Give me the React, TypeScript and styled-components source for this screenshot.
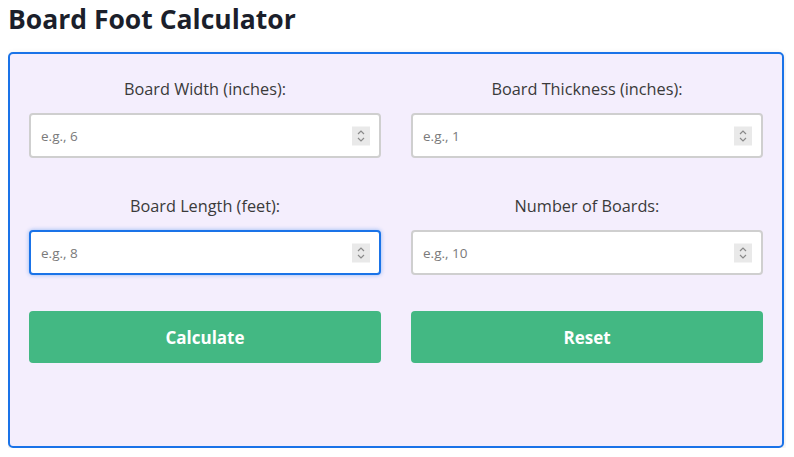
import React from "react";
import styled, { createGlobalStyle } from "styled-components";

const GlobalStyle = createGlobalStyle`
  body {
    margin: 8px;
    font-family: "Open Sans", "Noto Sans", sans-serif;
    background: #ffffff;
    color: #333333;
  }
`;

const Title = styled.h1`
  font-family: "Open Sans", "Noto Sans", sans-serif;
  font-size: 26.5px;
  font-weight: 700;
  color: #1b1f2b;
  margin: 0 0 22px;
  line-height: 22px;
`;

const Card = styled.div`
  max-width: 776px;
  border: 2px solid #1a73e8;
  border-radius: 5px;
  background: #f4eefd;
  padding: 23px 19px 20px;
  min-height: 396px;
  box-sizing: border-box;
  box-shadow: 0 2px 6px rgba(0, 0, 0, 0.12);
`;

const Grid = styled.div`
  display: grid;
  grid-template-columns: 1fr 1fr;
  column-gap: 30px;
  row-gap: 36px;
`;

const Field = styled.div`
  display: flex;
  flex-direction: column;
  gap: 12px;
`;

const Label = styled.label`
  text-align: center;
  font-size: 16.3px;
  line-height: 24px;
  color: #3a3a3a;
`;

const InputWrap = styled.div`
  position: relative;
`;

const Input = styled.input`
  width: 100%;
  height: 45px;
  box-sizing: border-box;
  border: 2px solid #cfcfcf;
  border-radius: 4px;
  padding: 0 10px;
  font-family: "Open Sans", "Noto Sans", sans-serif;
  font-size: 13.5px;
  background: #ffffff;
  outline: none;
  -moz-appearance: textfield;

  &::-webkit-inner-spin-button,
  &::-webkit-outer-spin-button {
    -webkit-appearance: none;
    margin: 0;
  }

  &::placeholder {
    color: #7a7a7a;
  }

  &:focus {
    border-color: #1a73e8;
    box-shadow: 0 0 4px rgba(26, 115, 232, 0.45);
  }
`;

const Spinner = styled.span`
  position: absolute;
  right: 11px;
  top: 50%;
  transform: translateY(-50%);
  width: 18px;
  height: 19px;
  background: #e9e9e9;
  display: flex;
  align-items: center;
  justify-content: center;
  pointer-events: none;
`;

const Button = styled.button`
  height: 52px;
  border: none;
  border-radius: 4px;
  background: #43b883;
  color: #ffffff;
  font-family: "Open Sans", "Noto Sans", sans-serif;
  font-size: 17px;
  font-weight: 700;
  cursor: pointer;
`;

const SpinIcon = () => (
  <svg width="10" height="15" viewBox="0 0 10 15" fill="none" stroke="#8a8a8a" strokeWidth="1.2">
    <path d="M2 5.5 L5 2.5 L8 5.5" />
    <path d="M2 9.5 L5 12.5 L8 9.5" />
  </svg>
);

const fields = [
  { label: "Board Width (inches):", placeholder: "e.g., 6" },
  { label: "Board Thickness (inches):", placeholder: "e.g., 1" },
  { label: "Board Length (feet):", placeholder: "e.g., 8", focus: true },
  { label: "Number of Boards:", placeholder: "e.g., 10" },
];

export default function App() {
  return (
    <>
      <GlobalStyle />
      <Title>Board Foot Calculator</Title>
      <Card>
        <Grid>
          {fields.map((f) => (
            <Field key={f.label}>
              <Label>{f.label}</Label>
              <InputWrap>
                <Input type="number" placeholder={f.placeholder} autoFocus={f.focus} />
                <Spinner>
                  <SpinIcon />
                </Spinner>
              </InputWrap>
            </Field>
          ))}
          <Button>Calculate</Button>
          <Button>Reset</Button>
        </Grid>
      </Card>
    </>
  );
}
